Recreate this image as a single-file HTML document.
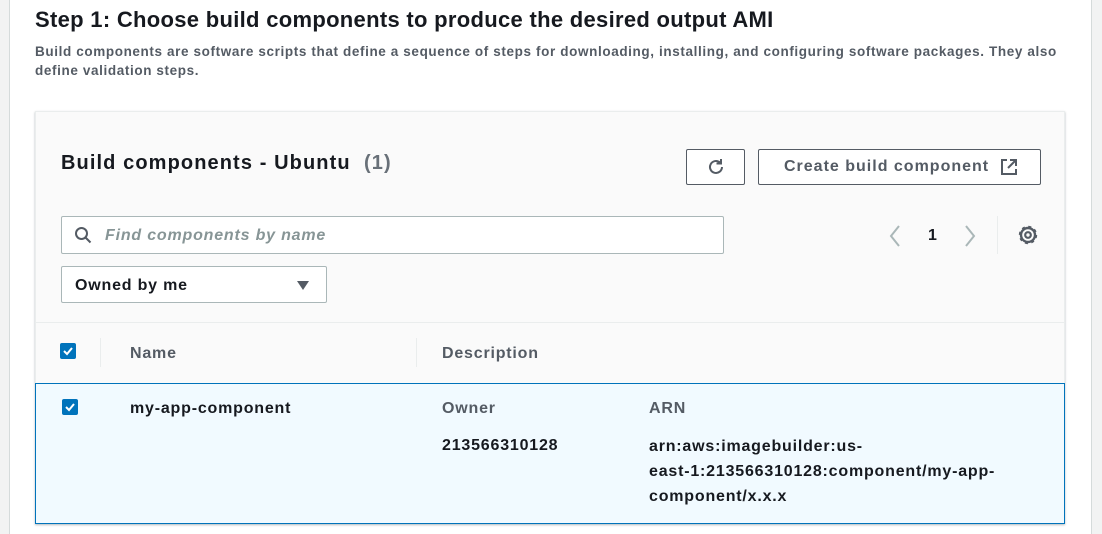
<!DOCTYPE html>
<html><head><style>
*{box-sizing:border-box;margin:0;padding:0}
body{width:1102px;height:534px;overflow:hidden;background:#f2f3f3;font-family:"Liberation Sans",Arial,sans-serif;font-weight:bold;position:relative;letter-spacing:0.8px}
.page{position:absolute;left:9px;top:0;width:1083px;height:534px;background:#fff;border-left:1px solid #d5dbdb;border-right:1px solid #d5dbdb}
.abs{position:absolute;white-space:nowrap}
h1{position:absolute;left:35px;top:7px;font-size:22px;color:#16191f;white-space:nowrap;letter-spacing:0.3px}
.desc{position:absolute;left:35px;top:42px;width:1050px;font-size:13.5px;line-height:19px;color:#545b64;letter-spacing:0.62px}
.card{position:absolute;left:35px;top:111px;width:1030px;height:413px;background:#fafafa;border:1px solid #eaeded;box-shadow:0 1px 2px rgba(0,28,36,.3)}
.btn{position:absolute;border:1px solid #545b64;border-radius:2px;background:#fff;color:#545b64;font-size:16px}
.hdrsep{position:absolute;left:0;right:0;top:210px;border-top:1px solid #eaeded}
.row{position:absolute;left:-1px;top:271px;width:1030px;height:141px;background:#f1faff;border:1px solid #0073bb}
.cb{position:absolute;width:16px;height:16px;background:#0073bb;border-radius:2px}
.g{color:#545b64;font-size:16px}
.k{color:#16191f;font-size:16px}
</style></head><body>
<div class="page"></div>
<h1>Step 1: Choose build components to produce the desired output AMI</h1>
<div class="desc">Build components are software scripts that define a sequence of steps for downloading, installing, and configuring software packages. They also define validation steps.</div>
<div class="card">
 <div class="abs" style="left:25px;top:40px;font-size:20px;color:#16191f;letter-spacing:1.1px">Build components - Ubuntu&nbsp; <span style="color:#687078">(1)</span></div>
 <div class="btn" style="left:650px;top:37px;width:59px;height:36px"><svg width="22" height="22" viewBox="0 0 22 22" style="position:absolute;left:18px;top:6px"><path d="M17 11a6 6 0 1 1-2-4.5" fill="none" stroke="#545b64" stroke-width="2"/><path d="M16 3v4.5h-4.5" fill="none" stroke="#545b64" stroke-width="2"/></svg></div>
 <div class="btn" style="left:722px;top:37px;width:283px;height:36px"><span style="position:absolute;left:25px;top:8px;letter-spacing:1px">Create build component</span><svg width="18" height="18" viewBox="0 0 18 18" style="position:absolute;left:241px;top:8px"><path d="M7 2H2v14h14v-5M10 2h6v6M16 2l-8 8" fill="none" stroke="#545b64" stroke-width="2"/></svg></div>
 <div class="abs" style="left:25px;top:104px;width:663px;height:38px;background:#fff;border:1px solid #aab7b8;border-radius:2px">
  <svg width="18" height="18" viewBox="0 0 18 18" style="position:absolute;left:12px;top:9px"><circle cx="7.5" cy="7.5" r="5.5" fill="none" stroke="#545b64" stroke-width="2"/><path d="M11.5 11.5l5 5" stroke="#545b64" stroke-width="2"/></svg>
  <span style="position:absolute;left:43px;top:10px;font-style:italic;color:#879596;font-size:16px">Find components by name</span></div>
 <div class="abs" style="left:25px;top:154px;width:266px;height:37px;background:#fff;border:1px solid #aab7b8;border-radius:2px">
  <span class="k" style="position:absolute;left:13px;top:10px">Owned by me</span>
  <svg width="12" height="10" style="position:absolute;left:235px;top:14px"><path d="M0 0h12L6 9z" fill="#545b64"/></svg></div>
 <svg width="20" height="24" style="position:absolute;left:850px;top:112px"><path d="M13 2L5 12l8 10" fill="none" stroke="#aab7b8" stroke-width="2"/></svg>
 <div class="abs k" style="left:892px;top:115px">1</div>
 <svg width="20" height="24" style="position:absolute;left:925px;top:112px"><path d="M5 2l8 10-8 10" fill="none" stroke="#aab7b8" stroke-width="2"/></svg>
 <div class="abs" style="left:961px;top:104px;height:38px;border-left:1px solid #eaeded"></div>
 <svg width="22" height="22" viewBox="0 0 22 22" style="position:absolute;left:981px;top:112px"><circle cx="11" cy="11" r="2.8" fill="none" stroke="#545b64" stroke-width="2.2"/><circle cx="11" cy="11" r="7" fill="none" stroke="#545b64" stroke-width="2.4"/><circle cx="11" cy="11" r="8.2" fill="none" stroke="#545b64" stroke-width="2" stroke-dasharray="3 3.44"/></svg>
 <div class="hdrsep"></div>
 <div class="cb" style="left:24px;top:231px"><svg width="16" height="16"><path d="M4 8l3 3 5-6" fill="none" stroke="#fff" stroke-width="2"/></svg></div>
 <div class="abs" style="left:64px;top:226px;height:29px;border-left:1px solid #eaeded"></div>
 <div class="abs g" style="left:94px;top:233px">Name</div>
 <div class="abs" style="left:380px;top:226px;height:29px;border-left:1px solid #eaeded"></div>
 <div class="abs g" style="left:406px;top:233px">Description</div>
 <div class="row">
  <div class="cb" style="left:26px;top:15px"><svg width="16" height="16"><path d="M4 8l3 3 5-6" fill="none" stroke="#fff" stroke-width="2"/></svg></div>
  <div class="abs k" style="left:94px;top:16px">my-app-component</div>
  <div class="abs g" style="left:406px;top:16px">Owner</div>
  <div class="abs k" style="left:406px;top:53px">213566310128</div>
  <div class="abs g" style="left:613px;top:16px">ARN</div>
  <div class="abs k" style="left:613px;top:50px;line-height:25px;width:400px">arn:aws:imagebuilder:us-<br>east-1:213566310128:component/my-app-<br>component/x.x.x</div>
 </div>
</div>
</body></html>
